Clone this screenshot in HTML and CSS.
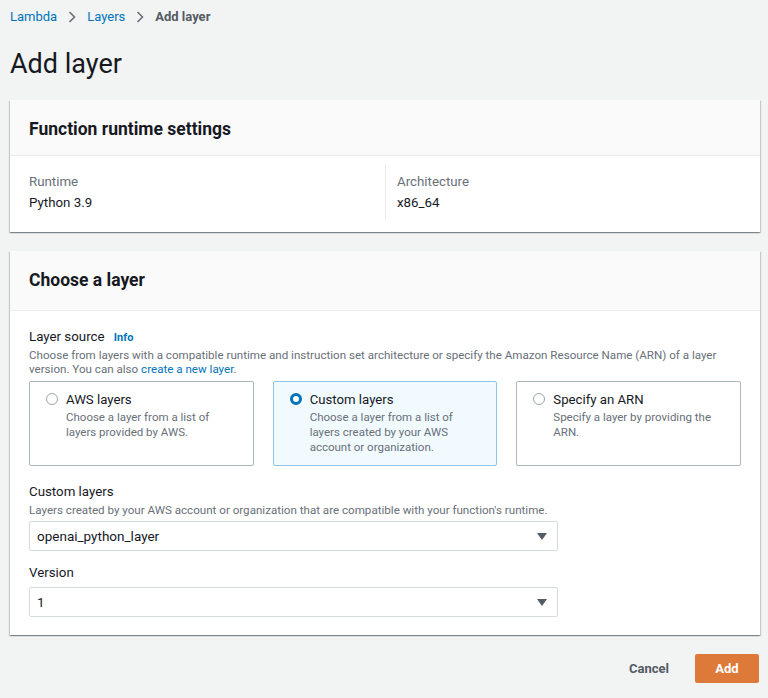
FILE: index.html
```html
<!DOCTYPE html>
<html lang="en">
<head>
  <meta charset="UTF-8">
  <meta name="viewport" content="width=device-width, initial-scale=1.0">
  <title>Add layer</title>
  <link rel="stylesheet" href="styles.css">
</head>
<body>
  <nav class="breadcrumbs">
    <a href="#">Lambda</a>
    <svg class="crumb-sep" width="8" height="12" viewBox="0 0 8 12"><path d="M1.5 1l5 5-5 5" fill="none" stroke="#687078" stroke-width="1.6"/></svg>
    <a href="#">Layers</a>
    <svg class="crumb-sep" width="8" height="12" viewBox="0 0 8 12"><path d="M1.5 1l5 5-5 5" fill="none" stroke="#687078" stroke-width="1.6"/></svg>
    <span class="current">Add layer</span>
  </nav>

  <h1>Add layer</h1>

  <div class="card">
    <div class="card-header">
      <h2>Function runtime settings</h2>
    </div>
    <div class="card-body settings">
      <div class="setting">
        <div class="setting-label">Runtime</div>
        <div class="setting-value">Python 3.9</div>
      </div>
      <div class="setting">
        <div class="setting-label">Architecture</div>
        <div class="setting-value">x86_64</div>
      </div>
    </div>
  </div>

  <div class="card">
    <div class="card-header tall">
      <h2>Choose a layer</h2>
    </div>
    <div class="card-body form">
      <div class="field-label">Layer source <a href="#" class="info">Info</a></div>
      <p class="field-desc">Choose from layers with a compatible runtime and instruction set architecture or specify the Amazon Resource Name (ARN) of a layer version. You can also <a href="#">create a new layer</a>.</p>

      <div class="tiles">
        <label class="tile">
          <span class="radio"></span>
          <span class="tile-text">
            <span class="tile-title">AWS layers</span>
            <span class="tile-desc">Choose a layer from a list of layers provided by AWS.</span>
          </span>
        </label>
        <label class="tile selected">
          <span class="radio checked"></span>
          <span class="tile-text">
            <span class="tile-title">Custom layers</span>
            <span class="tile-desc">Choose a layer from a list of layers created by your AWS account or organization.</span>
          </span>
        </label>
        <label class="tile">
          <span class="radio"></span>
          <span class="tile-text">
            <span class="tile-title">Specify an ARN</span>
            <span class="tile-desc">Specify a layer by providing the ARN.</span>
          </span>
        </label>
      </div>

      <div class="field-label spaced">Custom layers</div>
      <p class="field-desc tight">Layers created by your AWS account or organization that are compatible with your function's runtime.</p>
      <div class="select">
        <span>openai_python_layer</span>
        <svg width="10" height="7" viewBox="0 0 10 7"><path d="M0 0h10L5 7z" fill="#545b64"/></svg>
      </div>

      <div class="field-label version">Version</div>
      <div class="select">
        <span>1</span>
        <svg width="10" height="7" viewBox="0 0 10 7"><path d="M0 0h10L5 7z" fill="#545b64"/></svg>
      </div>
    </div>
  </div>

  <div class="actions">
    <button class="btn-link">Cancel</button>
    <button class="btn-primary">Add</button>
  </div>
</body>
</html>
```

FILE: styles.css
```css
body {
  margin: 0;
  padding: 0 8px 0 10px;
  background: #f2f3f3;
  color: #16191f;
  font-family: Roboto, "Liberation Sans", Arial, sans-serif;
  font-size: 13.3px;
}
a { color: #0073bb; text-decoration: none; }

.breadcrumbs {
  display: flex;
  align-items: center;
  gap: 9px;
  margin-top: 7px;
  line-height: 20px;
  font-size: 13px;
}
.breadcrumbs .crumb-sep { margin: 0 2px; }
.breadcrumbs .current { color: #545b64; font-weight: bold; }

h1 {
  margin: 20px 0 19px;
  font-size: 27px;
  line-height: 34px;
  font-weight: normal;
}

.card {
  background: white;
  margin-bottom: 19px;
  box-shadow: 0 1px 1px 0 rgba(0,28,36,0.3), 1px 1px 1px 0 rgba(0,28,36,0.15), -1px 1px 1px 0 rgba(0,28,36,0.15);
}
.card-header {
  background: #fafafa;
  border-bottom: 1px solid #eaeded;
  padding: 18px 19px 15px;
}
.card-header.tall { padding: 18px 19px 19px; }
.card-header h2 {
  margin: 0;
  font-size: 17.5px;
  line-height: 22px;
  font-weight: bold;
}

.card-body { padding: 0 19px; }

.settings {
  display: grid;
  grid-template-columns: 1fr 1fr;
  padding-top: 9px;
  padding-bottom: 11px;
}
.setting { padding: 7px 0; }
.setting + .setting {
  border-left: 1px solid #eaeded;
  padding-left: 11px;
}
.setting-label { color: #687078; line-height: 20px; }
.setting-value { line-height: 22px; }

.form { padding-top: 18px; padding-bottom: 18px; }
.field-label { line-height: 16px; }
.field-label .info { font-weight: bold; font-size: 11px; margin-left: 6px; }
.field-label.spaced { margin-top: 18px; }
.field-label.version { margin-top: 14px; margin-bottom: 6px; }
.field-desc {
  margin: 2px 0 0;
  color: #687078;
  font-size: 11.6px;
  line-height: 14px;
}
.field-desc.tight { margin-top: 3px; }

.tiles {
  display: grid;
  grid-template-columns: repeat(3, 1fr);
  gap: 19px;
  margin-top: 5px;
}
.tile {
  display: flex;
  gap: 8px;
  border: 1px solid #aab7b8;
  border-radius: 2px;
  padding: 8px 12px 10px 16px;
}
.tile.selected {
  background: #f1faff;
  border-color: #8cc8e6;
}
.radio {
  flex: none;
  width: 10px;
  height: 10px;
  margin-top: 3px;
  border: 1.5px solid #95a5a6;
  border-radius: 50%;
  background: white;
}
.radio.checked {
  width: 6px;
  height: 6px;
  border: 3.5px solid #0073bb;
}
.tile-text { display: flex; flex-direction: column; }
.tile-title { font-size: 13.2px; line-height: 19px; }
.tile-desc {
  margin-top: 1px;
  color: #687078;
  font-size: 11.5px;
  line-height: 15px;
}

.select {
  display: flex;
  justify-content: space-between;
  align-items: center;
  box-sizing: border-box;
  width: 529px;
  height: 30px;
  margin-top: 4px;
  padding: 0 10px 0 7px;
  background: white;
  border: 1px solid #d5dbdb;
  border-radius: 2px;
  font-size: 13.5px;
}
.field-label.version + .select { margin-top: 0; }

.actions {
  display: flex;
  justify-content: flex-end;
  align-items: center;
  gap: 16px;
}
.actions button {
  font-family: inherit;
  font-size: 13px;
  font-weight: bold;
  border: none;
  cursor: pointer;
}
.btn-link {
  background: none;
  color: #545b64;
  padding: 0 10px;
}
.btn-primary {
  width: 64px;
  height: 29px;
  margin-right: 1px;
  background: #dd7a3a;
  color: white;
  border-radius: 2px;
}
```
